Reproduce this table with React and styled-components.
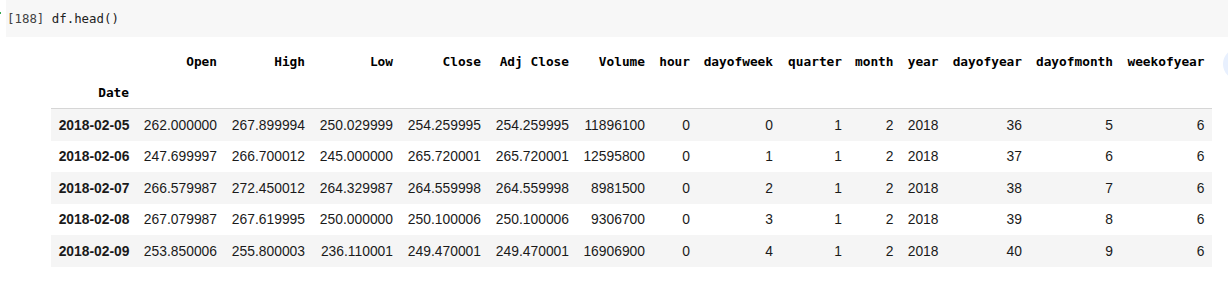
import React from "react";
import styled, { createGlobalStyle } from "styled-components";

const Global = createGlobalStyle`
  html, body { margin: 0; padding: 0; background: #ffffff; }
  body { width: 1228px; height: 286px; overflow: hidden; position: relative; }
`;

const Page = styled.div`
  position: relative;
  width: 1228px;
  height: 286px;
`;

const CodeBar = styled.div`
  position: relative;
  margin-left: 6px;
  height: 37px;
  background: #f7f7f7;
  display: flex;
  align-items: center;
  padding-left: 1px;
  padding-bottom: 1px;
  box-sizing: border-box;
  font-family: "DejaVu Sans Mono", monospace;
  font-size: 12.4px;
  color: #212121;
  white-space: pre;
`;

const RunMark = styled.span`
  position: absolute;
  left: -6px;
  top: 12px;
  width: 1px;
  height: 2px;
  background: #34a853;
`;

const Prompt = styled.span`
  color: #424242;
`;

const Output = styled.div`
  padding: 9px 0 0 51px;
`;

const Table = styled.table`
  border-collapse: collapse;
  table-layout: fixed;
  width: 1161px;
`;

const Col = styled.col`
  width: ${(p) => p.$w}px;
`;

const HeadCell = styled.th`
  font-family: "DejaVu Sans Mono", monospace;
  font-weight: bold;
  font-size: 12.8px;
  color: #000;
  text-align: right;
  padding: 0 7.5px 0 0;
  height: 31px;
  white-space: nowrap;
  vertical-align: middle;
  border-bottom: ${(p) => (p.$line ? "1px solid #d6d6d6" : "none")};
`;

const Row = styled.tr`
  background: ${(p) => (p.$shade ? "#f5f5f5" : "#ffffff")};
`;

const Cell = styled.td`
  font-family: "Liberation Sans", Arial, sans-serif;
  font-size: 13.85px;
  color: #1a1a1a;
  text-align: right;
  padding: 0 7.5px 0 0;
  height: 31.5px;
  white-space: nowrap;
  vertical-align: middle;
`;

const IndexCell = styled.th`
  font-family: "Liberation Sans", Arial, sans-serif;
  font-size: 13.85px;
  font-weight: bold;
  color: #1a1a1a;
  text-align: right;
  padding: 0 7px 0 0;
  height: 31.5px;
  white-space: nowrap;
  vertical-align: middle;
`;

const FloatButton = styled.div`
  position: absolute;
  left: 1223px;
  top: 48px;
  width: 32px;
  height: 32px;
  border-radius: 50%;
  background: #e8f0fe;
`;

const widths = [85.5, 88, 88, 88, 88, 88, 76, 45, 83, 69, 51.5, 45, 83.5, 91, 91.5];

const columns = [
  "Open",
  "High",
  "Low",
  "Close",
  "Adj Close",
  "Volume",
  "hour",
  "dayofweek",
  "quarter",
  "month",
  "year",
  "dayofyear",
  "dayofmonth",
  "weekofyear",
];

const rows = [
  ["2018-02-05", "262.000000", "267.899994", "250.029999", "254.259995", "254.259995", "11896100", "0", "0", "1", "2", "2018", "36", "5", "6"],
  ["2018-02-06", "247.699997", "266.700012", "245.000000", "265.720001", "265.720001", "12595800", "0", "1", "1", "2", "2018", "37", "6", "6"],
  ["2018-02-07", "266.579987", "272.450012", "264.329987", "264.559998", "264.559998", "8981500", "0", "2", "1", "2", "2018", "38", "7", "6"],
  ["2018-02-08", "267.079987", "267.619995", "250.000000", "250.100006", "250.100006", "9306700", "0", "3", "1", "2", "2018", "39", "8", "6"],
  ["2018-02-09", "253.850006", "255.800003", "236.110001", "249.470001", "249.470001", "16906900", "0", "4", "1", "2", "2018", "40", "9", "6"],
];

export default function App() {
  return (
    <Page>
      <Global />
      <CodeBar>
        <RunMark />
        <Prompt>[188]</Prompt> df.head()
      </CodeBar>
      <Output>
        <Table>
          <colgroup>
            {widths.map((w, i) => (
              <Col key={i} $w={w} />
            ))}
          </colgroup>
          <thead>
            <tr>
              <HeadCell />
              {columns.map((c) => (
                <HeadCell key={c}>{c}</HeadCell>
              ))}
            </tr>
            <tr>
              <HeadCell $line>Date</HeadCell>
              {columns.map((c) => (
                <HeadCell key={c} $line />
              ))}
            </tr>
          </thead>
          <tbody>
            {rows.map((r, i) => (
              <Row key={r[0]} $shade={i % 2 === 0}>
                <IndexCell>{r[0]}</IndexCell>
                {r.slice(1).map((v, j) => (
                  <Cell key={j}>{v}</Cell>
                ))}
              </Row>
            ))}
          </tbody>
        </Table>
      </Output>
      <FloatButton />
    </Page>
  );
}
